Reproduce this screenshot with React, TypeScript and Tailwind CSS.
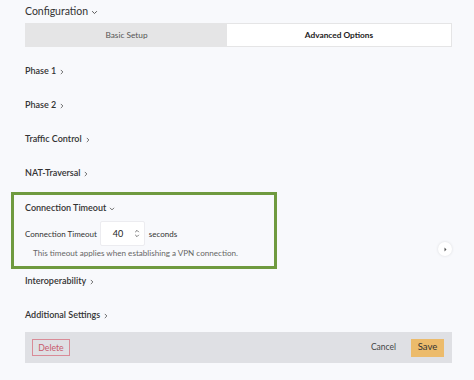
const ChevDown = ({ size = 6 }: { size?: number }) => (
  <svg width={size} height={size} viewBox="0 0 10 10" className="ml-[3px] mt-[1px]">
    <path d="M2 3.5 L5 6.5 L8 3.5" fill="none" stroke="#555" strokeWidth="1.4" strokeLinecap="round" />
  </svg>
);

const ChevRight = () => (
  <svg width={6} height={6} viewBox="0 0 10 10" className="ml-[3px] mt-[1px]">
    <path d="M3.5 2 L6.5 5 L3.5 8" fill="none" stroke="#555" strokeWidth="1.4" strokeLinecap="round" />
  </svg>
);

const Section = ({ label, className = "" }: { label: string; className?: string }) => (
  <div className={`flex text-[9px] font-semibold text-[#333] ${className}`}>
    <div className="flex items-center h-[12px]">
      {label}
      <ChevRight />
    </div>
  </div>
);

export default function App() {
  return (
    <div className="relative w-[474px] h-[380px] bg-[#f8f9fc] pl-[25px] pr-[22px] font-['Lato',sans-serif] overflow-hidden">
      <div className="flex items-center h-[23px] pt-[1px] text-[10.5px] text-[#333]">
        Configuration
        <ChevDown size={7} />
      </div>

      <div className="flex h-[24px] bg-[#e5e5e6] p-[1px]">
        <div className="flex-1 flex items-center justify-center text-[8.3px] text-[#555]">Basic Setup</div>
        <div className="w-[224px] flex items-center justify-center bg-white text-[8.3px] font-bold text-[#222]">
          Advanced Options
        </div>
      </div>

      <div className="mt-[7px]">
        <Section label="Phase 1" className="h-[34px] items-center" />
        <Section label="Phase 2" className="h-[34px] items-center" />
        <Section label="Traffic Control" className="h-[34px] items-center" />
        <Section label="NAT-Traversal" className="h-[34px] items-center" />
      </div>

      <div className="mt-[2px] -ml-[14px] w-[266px] h-[77px] border-[3px] border-[#6f9a3f] pl-[11px]">
        <div className="flex items-center h-[26px] text-[9px] font-semibold text-[#333]">
          Connection Timeout
          <ChevDown />
        </div>
        <div className="flex items-center h-[25px] text-[8px] text-[#333]">
          <span>Connection Timeout</span>
          <div className="ml-[3px] flex items-center w-[45px] h-[25px] bg-white border border-[#ececf0] rounded-[2px] pl-[12px]">
            <span className="text-[9px] text-[#222]">40</span>
            <svg width="6" height="9" viewBox="0 0 6 10" className="ml-[11px]">
              <path d="M1 3.5 L3 1.5 L5 3.5 M1 6.5 L3 8.5 L5 6.5" fill="none" stroke="#666" strokeWidth="1" />
            </svg>
          </div>
          <span className="ml-[4px]">seconds</span>
        </div>
        <div className="pl-[8px] pt-[1px] text-[8.1px] leading-[12px] text-[#666]">
          This timeout applies when establishing a VPN connection.
        </div>
      </div>

      <Section label="Interoperability" className="h-[29px] items-start pt-[6px]" />
      <Section label="Additional Settings" className="h-[34px] items-center" />

      <div className="flex items-center h-[31px] bg-[#dfe0e4] pl-[7px] pr-[8px]">
        <div className="flex items-center justify-center w-[38px] h-[17px] border border-[#d98b97] text-[8.7px] text-[#c85a6c]">
          Delete
        </div>
        <div className="ml-auto text-[8.5px] text-[#444]">Cancel</div>
        <div className="ml-[15px] flex items-center justify-center w-[33px] h-[18px] bg-[#ecbb6b] text-[9.5px] text-[#333]">
          Save
        </div>
      </div>

      <div className="absolute left-[438px] top-[242px] w-[14px] h-[14px] rounded-full bg-white shadow-[0_0_3px_rgba(0,0,0,0.12)] flex items-center justify-center">
        <svg width="5" height="5" viewBox="0 0 10 10">
          <path d="M3 1 L7 5 L3 9 Z" fill="#555" />
        </svg>
      </div>
    </div>
  );
}
